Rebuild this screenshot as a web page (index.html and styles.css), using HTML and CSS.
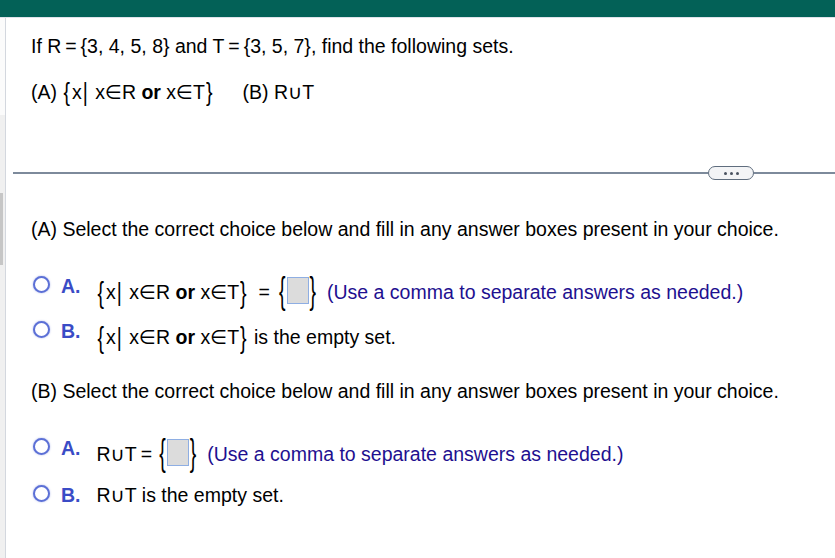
FILE: index.html
```html
<!DOCTYPE html>
<html>
<head>
<meta charset="utf-8">
<link rel="stylesheet" href="styles.css">
</head>
<body>
<div class="topbar"></div>
<div class="page">
  <div class="sidebar">
    <div class="sb-top"></div>
    <div class="sb-track"><div class="sb-thumb"></div></div>
  </div>
  <div class="content">
    <div class="q">
      <p class="line l1">If R<span class="eqs"> = </span>{3, 4, 5, 8} and T<span class="eqs"> = </span>{3, 5, 7}, find the following sets.</p>
      <p class="line l2">(A) <span class="set"><span class="br">{</span>x<span class="bar">|</span> x∈R <b>or</b> x∈T<span class="br">}</span></span><span class="gap"></span>(B) R∪T</p>
    </div>
    <div class="divider">
      <div class="rule"></div>
      <div class="more"><span class="dot"></span><span class="dot"></span><span class="dot"></span></div>
      <div class="rule end"></div>
    </div>
    <div class="q">
      <p class="line prompt pa">(A) Select the correct choice below and fill in any answer boxes present in your choice.</p>
      <div class="opt first">
        <span class="radio"></span><span class="lab">A.</span>
        <div class="body tall"><span class="br mid">{</span>x<span class="bar">|</span> x∈R <b>or</b> x∈T<span class="br mid">}</span><span class="eq">=</span><span class="br big">{</span><span class="box"></span><span class="br big">}</span><span class="hint">(Use a comma to separate answers as needed.)</span></div>
      </div>
      <div class="opt second">
        <span class="radio"></span><span class="lab">B.</span>
        <div class="body tall"><span class="br mid">{</span>x<span class="bar">|</span> x∈R <b>or</b> x∈T<span class="br mid">}</span> is the empty set.</div>
      </div>
      <p class="line prompt pb">(B) Select the correct choice below and fill in any answer boxes present in your choice.</p>
      <div class="opt first">
        <span class="radio"></span><span class="lab">A.</span>
        <div class="body tall">R∪T<span class="eq tight">=</span><span class="br big">{</span><span class="box"></span><span class="br big">}</span><span class="hint">(Use a comma to separate answers as needed.)</span></div>
      </div>
      <div class="opt last">
        <span class="radio"></span><span class="lab">B.</span>
        <div class="body">R∪T is the empty set.</div>
      </div>
    </div>
  </div>
</div>
</body>
</html>
```
FILE: styles.css
```css
html, body {
  margin: 0;
  padding: 0;
  background: #ffffff;
}
body {
  font-family: "Liberation Sans", Arial, "DejaVu Sans", sans-serif;
  font-size: 19.5px;
  color: #000;
  width: 835px;
  height: 558px;
  overflow: hidden;
}
.topbar {
  height: 17px;
  background: #036157;
  border-bottom: 1px solid #dfe3ea;
}
.page {
  display: flex;
  height: 540px;
}
.sidebar {
  width: 5px;
  border-right: 1px solid #d3d7de;
  display: flex;
  flex-direction: column;
}
.sb-top {
  height: 97px;
  background: #fbfbfb;
}
.sb-track {
  flex: 1;
  background: #f0f0f0;
}
.sb-thumb {
  margin-top: 78px;
  width: 3px;
  height: 72px;
  background: #c6c6c6;
}
.content {
  flex: 1;
  padding-left: 7px;
}
.q {
  padding-left: 18px;
}
.line {
  margin: 0;
  line-height: 24px;
  white-space: nowrap;
}
.l1 { margin-top: 16px; }
.l2 { margin-top: 22px; }
.eqs { margin: 0 -1.5px; }
.gap { display: inline-block; width: 28px; }
.br {
  display: inline-block;
  transform: scaleY(1.3);
  margin: 0 2px 0 1px;
}
.br.mid { transform: scaleY(1.5); }
.br.big { transform: translateY(-2px) scaleY(1.85); margin: 0 1px; }
.bar {
  display: inline-block;
  transform: scaleY(1.3);
  margin: 0 2px 0 1px;
}
.set b, .body b { font-weight: bold; }
.divider {
  display: flex;
  align-items: center;
  margin-top: 61px;
  height: 16px;
}
.rule {
  flex: 1;
  height: 1.5px;
  background: #7d8a9b;
}
.rule.end { flex: 0 0 81px; }
.more {
  width: 44px;
  height: 12px;
  border: 1.5px solid #5f6d7e;
  border-radius: 8px;
  background: #f3f4f6;
  display: flex;
  align-items: center;
  justify-content: center;
  gap: 3px;
}
.dot {
  width: 3px;
  height: 3px;
  border-radius: 50%;
  background: #4a5260;
}
.prompt.pa { margin-top: 36px; }
.prompt.pb { margin-top: 29.5px; }
.opt {
  display: flex;
  align-items: flex-start;
  line-height: 24px;
  white-space: nowrap;
}
.opt.first { margin-top: 33px; }
.opt.second { margin-top: 15px; }
.prompt.pb + .opt.first { margin-top: 33px; }
.opt.last { margin-top: 17px; }
.radio {
  flex: 0 0 auto;
  width: 13px;
  height: 13px;
  margin: 2px 0 0 2px;
  border: 2px solid #5c70d6;
  border-radius: 50%;
  box-shadow: 0 0 2px rgba(92, 112, 214, 0.55);
  background: #fff;
}
.lab {
  flex: 0 0 auto;
  width: 35.5px;
  margin-left: 11px;
  font-weight: bold;
  color: #3a4cc6;
}
.body.tall { padding-top: 6px; }
.eq {
  display: inline-block;
  margin: 0 8px 0 10px;
}
.eq.tight { margin: 0 6px 0 4px; }
.box {
  display: inline-block;
  width: 20px;
  height: 25px;
  margin-top: -5px;
  background: #dcdcdc;
  border: 1px solid #8eaee3;
  vertical-align: -5px;
}
.hint {
  color: #1e1090;
  margin-left: 10px;
}
```
